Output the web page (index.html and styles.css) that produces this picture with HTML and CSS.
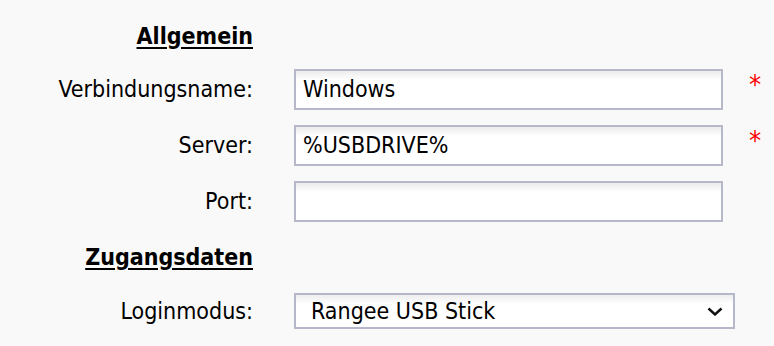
FILE: index.html
```html
<!DOCTYPE html>
<html lang="de">
<head>
<meta charset="utf-8">
<link rel="stylesheet" href="styles.css">
<title>Verbindung</title>
</head>
<body>
<form class="form">
  <div class="heading h1"><span>Allgemein</span></div>
  <div></div><div></div>

  <label class="label">Verbindungsname:</label>
  <div class="field"><span class="value">Windows</span></div>
  <span class="req">*</span>

  <label class="label">Server:</label>
  <div class="field"><span class="value">%USBDRIVE%</span></div>
  <span class="req">*</span>

  <label class="label">Port:</label>
  <div class="field"></div>
  <span></span>

  <div class="heading h2"><span>Zugangsdaten</span></div>
  <div></div><div></div>

  <label class="label">Loginmodus:</label>
  <div class="select"><span class="value">Rangee USB Stick</span>
    <svg class="chev" width="16" height="9" viewBox="0 0 16 9"><path d="M1.5 1.5 L8 7.5 L14.5 1.5" fill="none" stroke="#111" stroke-width="2.4"/></svg>
  </div>
  <span></span>
</form>
</body>
</html>
```
FILE: styles.css
```css
html, body {
  margin: 0;
  padding: 0;
  background: #f9f9f9;
}
body {
  font-family: "DejaVu Sans Condensed", "DejaVu Sans", sans-serif;
  font-size: 23px;
  color: #000;
}
.form {
  display: grid;
  grid-template-columns: 294px 455px auto;
  grid-template-rows: 61px 56px 56px 56px 56px 52px;
  align-items: center;
}
.heading {
  text-align: right;
  font-weight: bold;
  text-decoration: underline;
  text-underline-offset: 3px;
  padding-right: 41px;
}
.h1 { padding-top: 10px; }
.label {
  text-align: right;
  padding-right: 41px;
}
.field {
  box-sizing: border-box;
  width: 429px;
  height: 41px;
  border: 2px solid #b6b8ca;
  background: linear-gradient(#ececec 0, #fff 9px, #fff 100%);
  display: flex;
  align-items: center;
  padding-left: 7px;
}
.select {
  box-sizing: border-box;
  width: 441px;
  height: 36px;
  border: 2px solid #b6b8ca;
  background: linear-gradient(#ededed 0, #fff 9px, #fff 100%);
  display: flex;
  align-items: center;
  justify-content: space-between;
  padding-left: 15px;
  padding-right: 10px;
}
.req {
  color: #ff0000;
  font-size: 27px;
  line-height: 1;
  align-self: start;
  padding-top: 10px;
}
.chev { display: block; }
```
